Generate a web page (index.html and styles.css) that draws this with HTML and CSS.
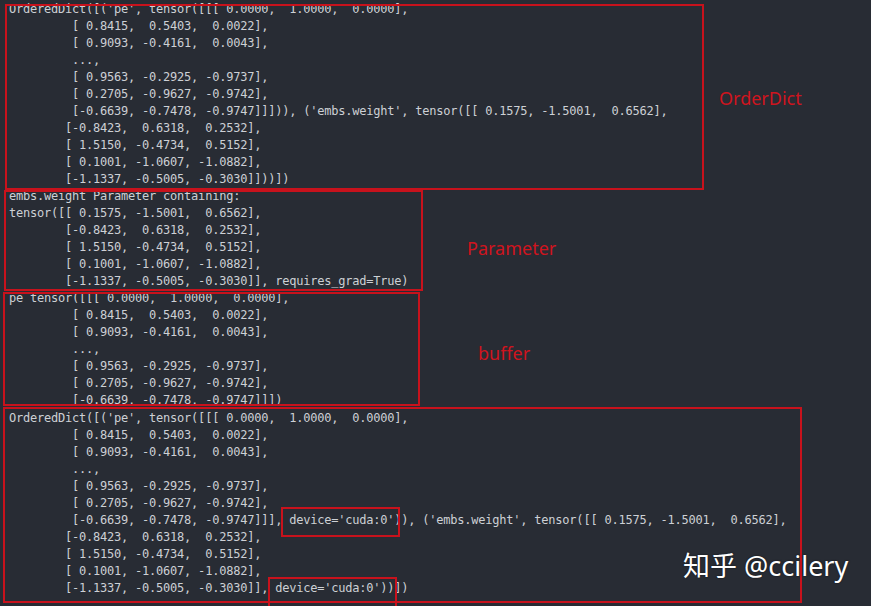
FILE: index.html
```html
<!DOCTYPE html>
<html lang="en">
<head>
<meta charset="utf-8">
<title>OrderedDict / Parameter / buffer</title>
<link rel="stylesheet" href="styles.css">
</head>
<body>
<div class="screen">
  <div class="shot shot-top">
<pre class="code">OrderedDict([('pe', tensor([[[ 0.0000,  1.0000,  0.0000],
         [ 0.8415,  0.5403,  0.0022],
         [ 0.9093, -0.4161,  0.0043],
         ...,
         [ 0.9563, -0.2925, -0.9737],
         [ 0.2705, -0.9627, -0.9742],
         [-0.6639, -0.7478, -0.9747]]])), ('embs.weight', tensor([[ 0.1575, -1.5001,  0.6562],
        [-0.8423,  0.6318,  0.2532],
        [ 1.5150, -0.4734,  0.5152],
        [ 0.1001, -1.0607, -1.0882],
        [-1.1337, -0.5005, -0.3030]]))])</pre>
<pre class="code">embs.weight Parameter containing:
tensor([[ 0.1575, -1.5001,  0.6562],
        [-0.8423,  0.6318,  0.2532],
        [ 1.5150, -0.4734,  0.5152],
        [ 0.1001, -1.0607, -1.0882],
        [-1.1337, -0.5005, -0.3030]], requires_grad=True)</pre>
<pre class="code">pe tensor([[[ 0.0000,  1.0000,  0.0000],
         [ 0.8415,  0.5403,  0.0022],
         [ 0.9093, -0.4161,  0.0043],
         ...,
         [ 0.9563, -0.2925, -0.9737],
         [ 0.2705, -0.9627, -0.9742],
         [-0.6639, -0.7478, -0.9747]]])</pre>
  </div>
  <div class="shot shot-bottom">
<pre class="code">OrderedDict([('pe', tensor([[[ 0.0000,  1.0000,  0.0000],
         [ 0.8415,  0.5403,  0.0022],
         [ 0.9093, -0.4161,  0.0043],
         ...,
         [ 0.9563, -0.2925, -0.9737],
         [ 0.2705, -0.9627, -0.9742],
         [-0.6639, -0.7478, -0.9747]]], device='cuda:0')), ('embs.weight', tensor([[ 0.1575, -1.5001,  0.6562],</pre>
<pre class="code">        [-0.8423,  0.6318,  0.2532],
        [ 1.5150, -0.4734,  0.5152],
        [ 0.1001, -1.0607, -1.0882],
        [-1.1337, -0.5005, -0.3030]], device='cuda:0'))])</pre>
  </div>

  <div class="mark mark-dict"></div>
  <div class="mark mark-param"></div>
  <div class="mark mark-buffer"></div>
  <div class="mark mark-dict2"></div>
  <div class="mark mark-dev1"></div>
  <div class="mark mark-dev2"></div>

  <span class="label label-dict">OrderDict</span>
  <span class="label label-param">Parameter</span>
  <span class="label label-buffer">buffer</span>

  <div class="watermark">知乎 @ccilery</div>
</div>
</body>
</html>
```

FILE: styles.css
```css
html, body {
  margin: 0;
  padding: 0;
  background: #282c34;
}

.screen {
  position: relative;
  width: 871px;
  height: 606px;
  overflow: hidden;
  background: #282c34;
}

.shot {
  padding-left: 9px;
}

.shot-top {
  height: 404px;
  padding-top: 1px;
  overflow: hidden;
}

.shot-bottom {
  padding-top: 5px;
}

.code {
  display: block;
  width: fit-content;
  margin: 0;
  font-family: "DejaVu Sans Mono", "Liberation Mono", monospace;
  font-size: 12px;
  letter-spacing: -0.22px;
  line-height: 17px;
  color: #cdd0d5;
  white-space: pre;
}

/* red annotation rectangles drawn over the screenshot */
.mark {
  position: absolute;
  box-sizing: border-box;
  border: 2px solid #c8121c;
}

.mark-dict   { left: 5px;   top: 4px;   width: 699px; height: 186px; }
.mark-param  { left: 4px;   top: 190px; width: 419px; height: 101px; }
.mark-buffer { left: 3px;   top: 292px; width: 417px; height: 114px; }
.mark-dict2  { left: 3px;   top: 407px; width: 799px; height: 196px; }
.mark-dev1   { left: 281px; top: 507px; width: 119px; height: 30px; }
.mark-dev2   { left: 268px; top: 577px; width: 129px; height: 31px; }

.label {
  position: absolute;
  font-family: "Noto Sans", "Open Sans", sans-serif;
  font-size: 18px;
  line-height: 20px;
  color: #d0141e;
}

.label-dict   { left: 719px; top: 88px; }
.label-param  { left: 467px; top: 238px; }
.label-buffer { left: 478px; top: 343px; }

.watermark {
  position: absolute;
  left: 683px;
  top: 548px;
  font-family: "Noto Sans", "Noto Sans CJK SC", sans-serif;
  font-size: 27px;
  line-height: 36px;
  color: #ffffff;
  text-shadow: 0 0 2px rgba(0, 0, 0, 0.6);
  white-space: nowrap;
}
```
